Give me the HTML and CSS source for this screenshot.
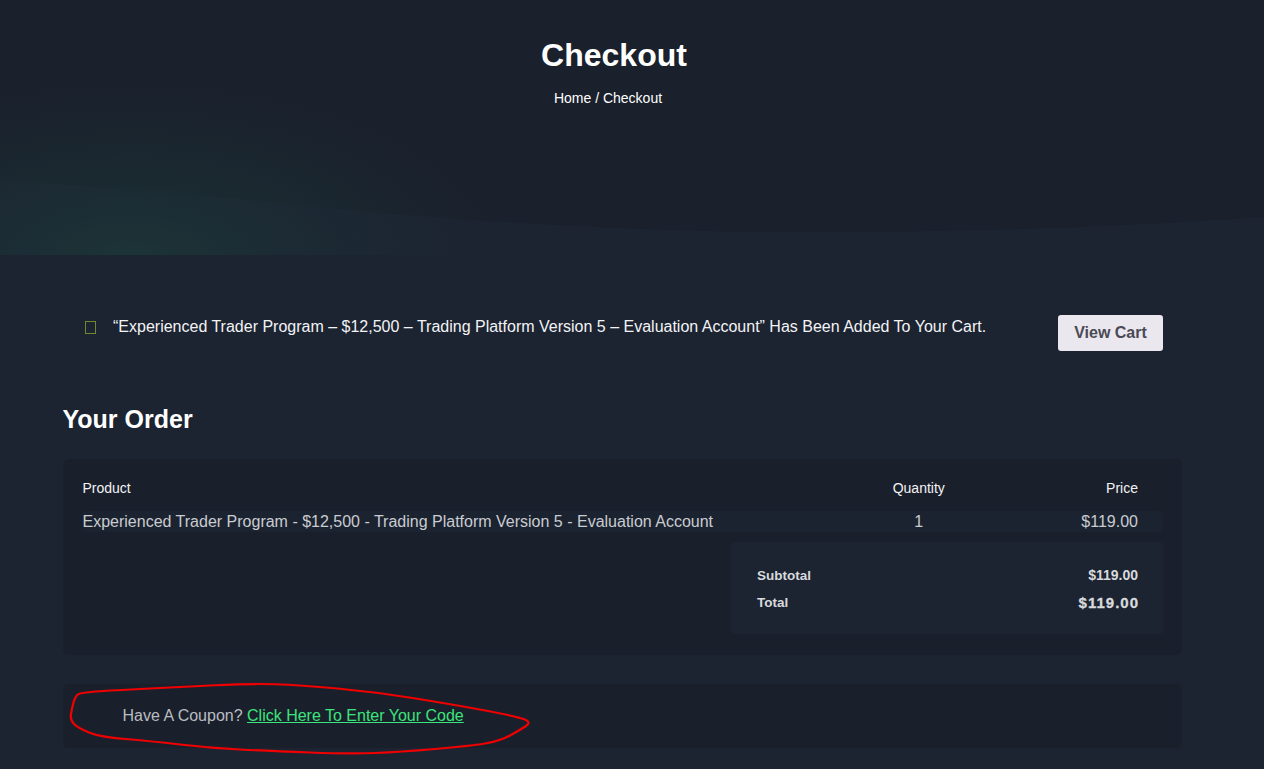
FILE: index.html
```html
<!DOCTYPE html>
<html lang="en">
<head>
<meta charset="UTF-8" />
<meta name="viewport" content="width=device-width, initial-scale=1" />
<title>Checkout</title>
<link rel="stylesheet" href="styles.css">
</head>
<body>
<header class="hero">
    <svg class="hero-bg" width="1264" height="255" viewBox="0 0 1264 255" aria-hidden="true">
        <defs>
            <radialGradient id="glow" gradientUnits="userSpaceOnUse" cx="0" cy="0" r="1" gradientTransform="translate(130 262) scale(380 185)">
                <stop offset="0" stop-color="#1c3b3a" stop-opacity="0.72" />
                <stop offset="0.6" stop-color="#1b3236" stop-opacity="0.34" />
                <stop offset="1" stop-color="#1b2a30" stop-opacity="0" />
            </radialGradient>
        </defs>
        <path d="M0 0H1264V217C1100 228 960 232 800 232C620 232 420 218 250 200C150 190 70 186 0 178Z" fill="#1a212c" />
        <rect width="1264" height="255" fill="url(#glow)" />
    </svg>
    <h1>Checkout</h1>
    <p class="crumbs">Home / Checkout</p>
</header>
<main class="container">
    <div class="notice">
        <span class="notice-icon"></span>
        <p>“Experienced Trader Program – $12,500 – Trading Platform Version 5 – Evaluation Account” Has Been Added To Your Cart.</p>
        <a class="btn" href="#">View Cart</a>
    </div>
    <h2>Your Order</h2>
    <section class="card order">
        <div class="order-row order-head">
            <span>Product</span>
            <span class="qty">Quantity</span>
            <span class="price">Price</span>
        </div>
        <div class="order-row order-item">
            <span>Experienced Trader Program - $12,500 - Trading Platform Version 5 - Evaluation Account</span>
            <span class="qty">1</span>
            <span class="price">$119.00</span>
        </div>
        <div class="totals">
            <div class="totals-row">
                <span>Subtotal</span>
                <span class="amount">$119.00</span>
            </div>
            <div class="totals-row">
                <span>Total</span>
                <span class="grand">$119.00</span>
            </div>
        </div>
    </section>
    <section class="card coupon">
        Have A Coupon? <a href="#">Click Here To Enter Your Code</a>
        <svg class="scribble" width="470" height="80" viewBox="0 0 470 80" aria-hidden="true">
            <path d="M37 8.25Q57 7 87 5.5Q117 4 152 2.25Q187 .5 212 1.25Q237 2 274.5 5.5Q312 9 349.5 15Q387 21 419.5 27Q452 33 460.5 36Q469 39 463 43Q457 47 447 52.5Q437 58 422 60.5Q407 63 372 66Q337 69 312 70Q287 71 247 69.5Q207 68 177 66.5Q147 65 117 61.5Q87 58 62 56Q37 54 26 49.5Q15 45 11 41Q7 37 8 31Q9 25 10.5 19.5Q12 14 14.5 11.75Q17 9.5 37 8.25Z" />
        </svg>
    </section>
</main>
</body>
</html>
```

FILE: styles.css
```css
body {
    margin: 0;
    font-family: "Liberation Sans", Arial, sans-serif;
    background-color: #1c2331;
    color: #c9ccd1;
    font-size: 16px;
}
.hero {
    position: relative;
    height: 255px;
    padding: 37px 36px 0 0;
    box-sizing: border-box;
    text-align: center;
    overflow: hidden;
}
.hero-bg {
    position: absolute;
    top: 0;
    left: 0;
}
.hero h1,
.crumbs {
    position: relative;
    margin: 0;
    color: #fff;
}
.hero h1 {
    font-size: 32px;
    line-height: 37px;
    font-weight: 700;
}
.crumbs {
    margin-top: 15px;
    padding-right: 12px;
    font-size: 14px;
    line-height: 18px;
}
.container {
    width: 1119px;
    margin-left: 63px;
    padding-bottom: 21px;
}
.notice {
    display: flex;
    align-items: flex-start;
    height: 96px;
    padding: 60px 19px 0 22px;
    box-sizing: border-box;
    color: #f2f3f5;
}
.notice-icon {
    flex: none;
    width: 9px;
    height: 11px;
    margin: 6px 17px 0 0;
    border: 1px solid #6f8a2e;
}
.notice p {
    flex: 1;
    margin: 3px 0 0;
    line-height: 18px;
    white-space: nowrap;
}
.btn {
    flex: none;
    width: 105px;
    height: 36px;
    line-height: 35px;
    text-align: center;
    background-color: #ebe7ef;
    color: #4a4a55;
    font-weight: 700;
    border-radius: 3px;
    text-decoration: none;
}
h2 {
    margin: 0 0 0 -0.5px;
    padding-top: 53px;
    height: 55px;
    line-height: 30px;
    font-size: 25px;
    font-weight: 700;
    color: #fff;
}
.card {
    background-color: #1a202b;
    border-radius: 6px;
}
.order {
    padding: 20px 19px 21px 20px;
}
.order-row {
    display: grid;
    grid-template-columns: 1fr 120px 184px;
}
.qty {
    text-align: center;
}
.price {
    text-align: right;
    padding-right: 25px;
}
.order-head {
    font-size: 14px;
    line-height: 18px;
    color: #f2f3f5;
    margin-bottom: 14px;
    text-indent: -0.5px;
}
.order-item {
    line-height: 21px;
    background-color: #1c2330;
    border-radius: 4px;
    text-indent: -0.5px;
}
.totals {
    width: 432px;
    height: 92px;
    box-sizing: border-box;
    margin: 10px 0 0 auto;
    padding: 24px 25px 0 26px;
    background-color: #1c2331;
    border-radius: 4px;
    font-size: 13.5px;
    font-weight: 700;
    color: #d8dadd;
}
.totals-row {
    display: flex;
    justify-content: space-between;
    align-items: center;
    height: 18px;
    margin-bottom: 9px;
}
.amount {
    font-size: 14px;
}
.grand {
    font-size: 15px;
    letter-spacing: 1px;
    margin-right: -1px;
    -webkit-text-stroke: 0.3px #d8dadd;
}
.coupon {
    position: relative;
    margin-top: 29px;
    height: 64px;
    padding-left: 59.5px;
    line-height: 63px;
    color: #b9bcc2;
}
.coupon a {
    color: #3ce47c;
}
.scribble {
    position: absolute;
    top: -1px;
    left: 0;
    overflow: visible;
}
.scribble path {
    fill: none;
    stroke: #f00000;
    stroke-width: 2.2;
}
```
